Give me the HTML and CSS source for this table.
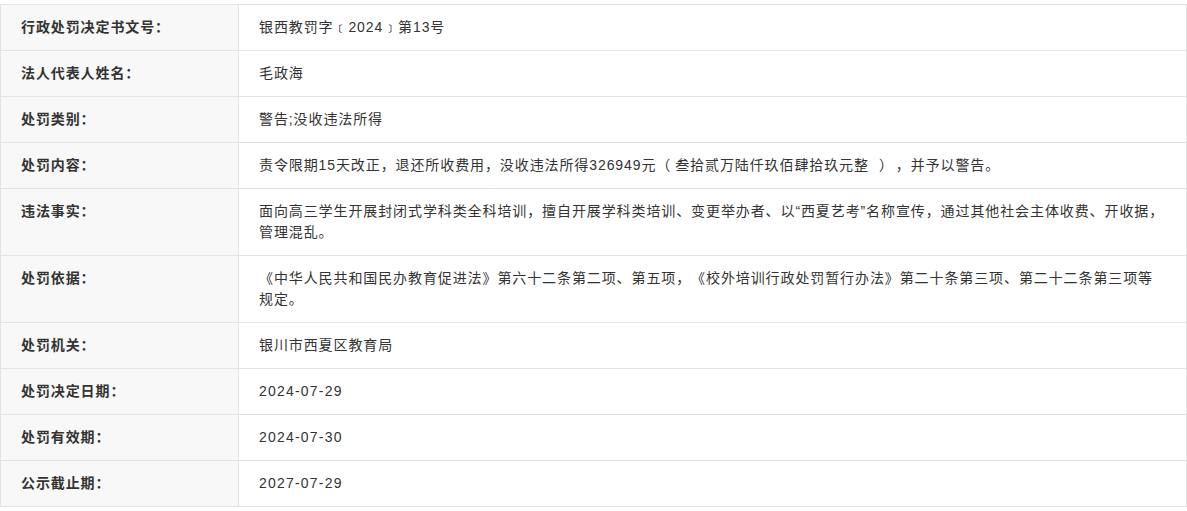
FILE: index.html
```html
<!DOCTYPE html>
<html lang="zh-CN">
<head>
    <meta charset="utf-8">
    <title>行政处罚决定书</title>
    <link rel="stylesheet" href="styles.css">
</head>
<body>
    <table class="penalty-table">
        <tr>
            <th>行政处罚决定书文号：</th>
            <td>银西教罚字﹝2024﹞第13号</td>
        </tr>
        <tr>
            <th>法人代表人姓名：</th>
            <td>毛政海</td>
        </tr>
        <tr>
            <th>处罚类别：</th>
            <td>警告;没收违法所得</td>
        </tr>
        <tr>
            <th>处罚内容：</th>
            <td>责令限期15天改正，退还所收费用，没收违法所得326949元<span class="paren-open">（</span>叁拾贰万陆仟玖佰肆拾玖元整<span class="paren-close">）</span>，并予以警告。</td>
        </tr>
        <tr>
            <th>违法事实：</th>
            <td>面向高三学生开展封闭式学科类全科培训，擅自开展学科类培训、变更举办者、以“西夏艺考”名称宣传，通过其他社会主体收费、开收据，管理混乱。</td>
        </tr>
        <tr>
            <th>处罚依据：</th>
            <td>《中华人民共和国民办教育促进法》第六十二条第二项、第五项，《校外培训行政处罚暂行办法》第二十条第三项、第二十二条第三项等规定。</td>
        </tr>
        <tr>
            <th>处罚机关：</th>
            <td>银川市西夏区教育局</td>
        </tr>
        <tr>
            <th>处罚决定日期：</th>
            <td class="date">2024-07-29</td>
        </tr>
        <tr>
            <th>处罚有效期：</th>
            <td class="date">2024-07-30</td>
        </tr>
        <tr>
            <th>公示截止期：</th>
            <td class="date">2027-07-29</td>
        </tr>
    </table>
</body>
</html>
```

FILE: styles.css
```css
body {
    margin: 0;
    padding: 4px 0 0 0;
    background-color: #ffffff;
    font-family: "Liberation Sans", "Noto Sans CJK SC", sans-serif;
    color: #333333;
}

.penalty-table {
    width: 100%;
    border-collapse: collapse;
    font-size: 14px;
    letter-spacing: 0.9px;
    line-height: 21px;
    text-spacing-trim: space-all;
}

.penalty-table th,
.penalty-table td {
    border: 1px solid #e3e3e3;
    padding: 12px 20px 12px 20px;
    text-align: left;
    vertical-align: top;
}

.penalty-table th {
    width: 197px;
    background-color: #f8f8f8;
    font-weight: bold;
    color: #333333;
}

.penalty-table td {
    background-color: #ffffff;
    font-weight: normal;
}

.penalty-table td.date {
    letter-spacing: 1.2px;
}

.paren-open {
    margin-right: 4px;
}

.paren-close {
    margin: 0 2px 0 10px;
}
```
